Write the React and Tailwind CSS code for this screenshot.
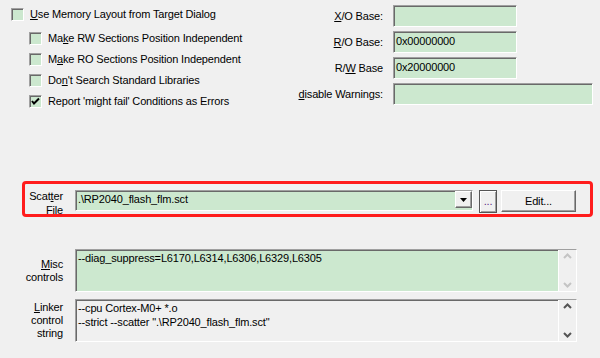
import React from "react";

const green = "bg-[#cce8cf]";
const sunken =
  "border border-t-[#a0a0a0] border-l-[#a0a0a0] border-r-white border-b-white shadow-[inset_1px_1px_0_#696969]";
const raised =
  "border border-t-white border-l-white border-r-[#696969] border-b-[#696969] shadow-[inset_-1px_-1px_0_#a0a0a0]";

const Checkbox = ({ checked }) => (
  <div className={`w-[13px] h-[13px] shrink-0 ${green} ${sunken} flex items-center justify-center`}>
    {checked && (
      <svg width="9" height="9" viewBox="0 0 9 9">
        <path d="M1 4 L3 6.5 L8 1.5" stroke="#000" strokeWidth="2" fill="none" />
      </svg>
    )}
  </div>
);

const CheckRow = ({ children, checked, indent }) => (
  <div className={`h-[21px] flex items-center gap-[6px] ${indent ? "pl-[29px]" : "pl-[11px]"}`}>
    <Checkbox checked={checked} />
    <span>{children}</span>
  </div>
);

const U = ({ children }) => <span className="underline underline-offset-[1px]">{children}</span>;

const Chevron = ({ up, color }) => (
  <svg width="9" height="6" viewBox="0 0 9 6">
    <path d={up ? "M1 5 L4.5 1.5 L8 5" : "M1 1 L4.5 4.5 L8 1"} stroke={color} strokeWidth="2" fill="none" />
  </svg>
);

const TextBox = ({ bg, arrows, children }) => (
  <div className={`ml-[12px] w-[502px] h-[43px] flex ${bg} ${sunken}`}>
    <div className="flex-1 pl-[2px] pt-[1px] leading-[14px] whitespace-pre">{children}</div>
    <div className="w-[18px] bg-[#f0f0f0] border-l border-white flex flex-col justify-between py-[3px] items-center">
      <Chevron up color={arrows} />
      <Chevron color={arrows} />
    </div>
  </div>
);

export default function App() {
  return (
    <div className="w-[600px] h-[358px] bg-[#f0f0f0] overflow-hidden text-[11px] text-black tracking-[-0.15px] font-['Liberation_Sans',Arial,sans-serif]">
      {/* options */}
      <div className="flex h-[112px]">
        <div className="w-[280px] pt-[4px]">
          <CheckRow>
            <U>U</U>se Memory Layout from Target Dialog
          </CheckRow>
          <div className="mt-[3px]">
            <CheckRow indent>
              Ma<U>k</U>e RW Sections Position Independent
            </CheckRow>
            <CheckRow indent>
              M<U>a</U>ke RO Sections Position Independent
            </CheckRow>
            <CheckRow indent>
              Do<U>n</U>'t Search Standard Libraries
            </CheckRow>
            <CheckRow indent checked>
              Report 'might fail' Conditions as Errors
            </CheckRow>
          </div>
        </div>
        <div className="pt-[5px] grid grid-cols-[103px_auto] gap-x-[10px] gap-y-[4px] auto-rows-[22px] items-center content-start">
          <div className="text-right">
            <U>X</U>/O Base:
          </div>
          <div className={`w-[124px] h-[22px] ${green} ${sunken}`} />
          <div className="text-right">
            <U>R</U>/O Base:
          </div>
          <div className={`w-[124px] h-[22px] ${green} ${sunken} pl-[2px] leading-[18px]`}>0x00000000</div>
          <div className="text-right">
            R/<U>W</U> Base
          </div>
          <div className={`w-[124px] h-[22px] ${green} ${sunken} pl-[2px] leading-[18px]`}>0x20000000</div>
          <div className="text-right whitespace-nowrap">
            <U>d</U>isable Warnings:
          </div>
          <div className={`w-[200px] h-[22px] ${green} ${sunken}`} />
        </div>
      </div>

      {/* scatter file */}
      <div className="mt-[69px] ml-[22px] w-[571px] h-[36px] border-[3px] border-[#ff1c1c] rounded-[4px] flex items-start pt-[6px]">
        <div className="w-[38px] text-right leading-[14px] -mt-[1px]">
          Scat<U>t</U>er
          <br />
          File
        </div>
        <div className={`ml-[12px] w-[398px] h-[21px] flex ${green} ${sunken}`}>
          <div className="flex-1 pl-[2px] leading-[17px]">.\RP2040_flash_flm.sct</div>
          <div className={`w-[17px] h-[17px] bg-[#f0f0f0] ${raised} flex items-center justify-center`}>
            <svg width="7" height="4" viewBox="0 0 7 4">
              <path d="M0 0 H7 L3.5 4 Z" fill="#000" />
            </svg>
          </div>
        </div>
        <div className="ml-[6px] w-[18px] h-[23px] bg-[#f0f0f0] border border-[#555] shadow-[inset_1px_1px_0_#fff,inset_-1px_-1px_0_#a0a0a0] flex items-center justify-center text-[#5b2a86]">
          ...
        </div>
        <div className={`ml-[4px] w-[75px] h-[22px] bg-[#f0f0f0] ${raised} flex items-center justify-center`}>
          Edit...
        </div>
      </div>

      {/* misc controls */}
      <div className="mt-[32px] flex items-center">
        <div className="w-[63px] text-right leading-[13px]">
          <U>M</U>isc
          <br />
          controls
        </div>
        <TextBox bg={green} arrows="#c4c4c4">
          --diag_suppress=L6170,L6314,L6306,L6329,L6305
        </TextBox>
      </div>

      {/* linker control string */}
      <div className="mt-[7px] flex items-center">
        <div className="w-[63px] text-right leading-[13px]">
          <U>L</U>inker
          <br />
          control
          <br />
          string
        </div>
        <TextBox bg="bg-[#f0f0f0]" arrows="#555">
          {"--cpu Cortex-M0+ *.o\n--strict --scatter \".\\RP2040_flash_flm.sct\""}
        </TextBox>
      </div>
    </div>
  );
}
